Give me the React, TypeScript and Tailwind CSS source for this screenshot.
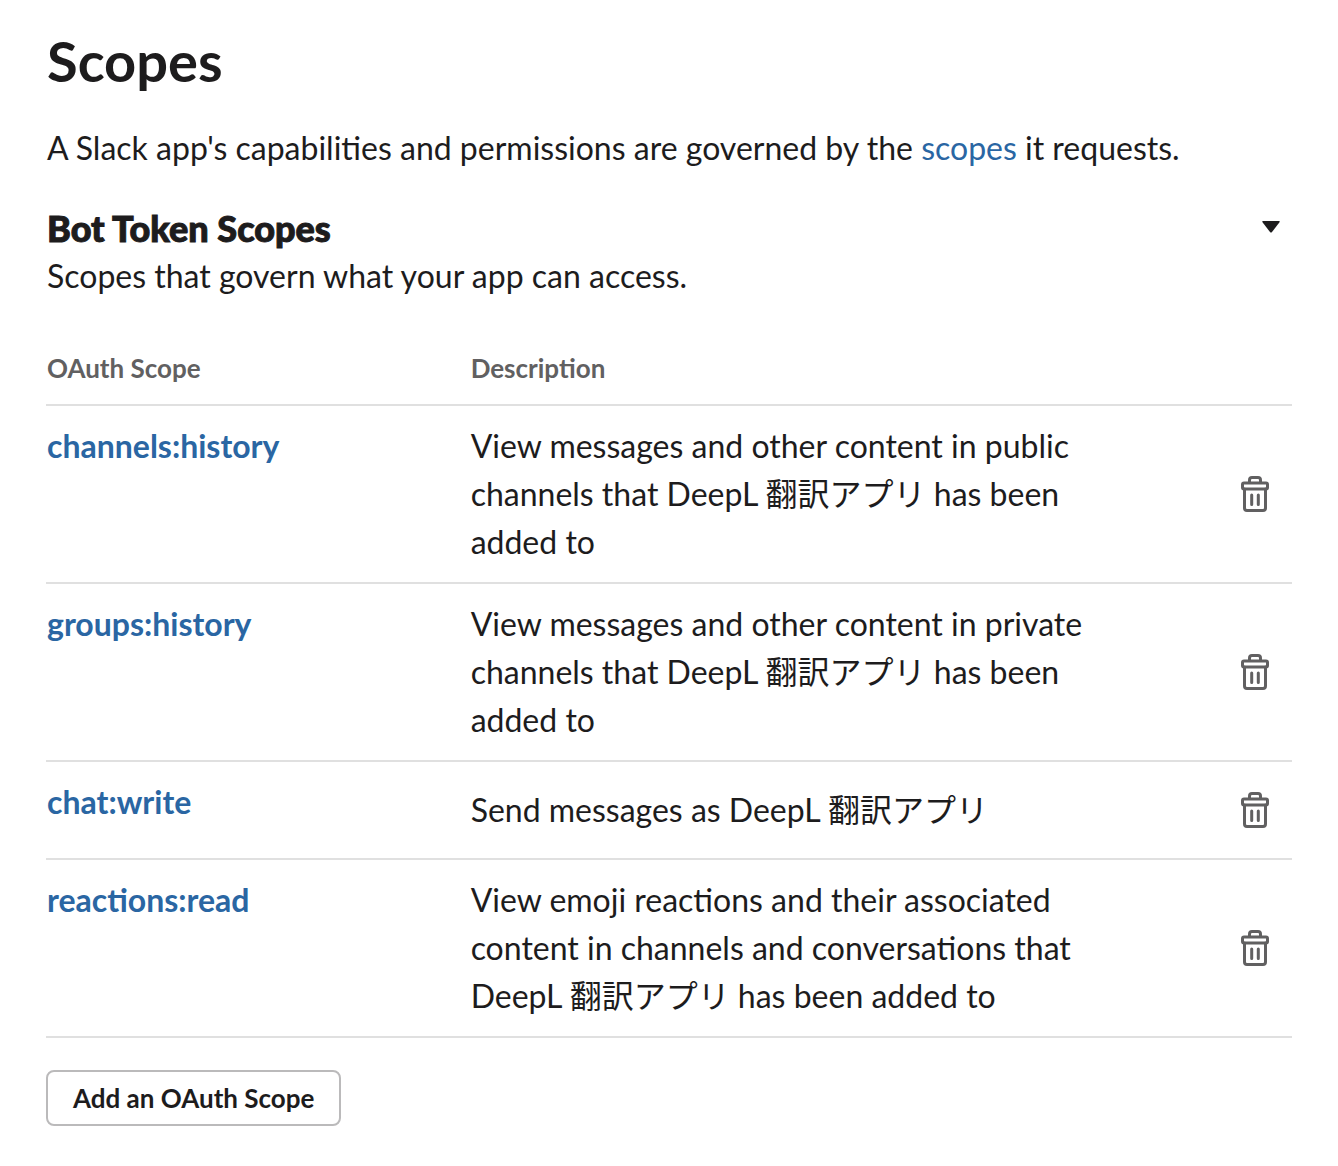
const scopes = [
  { name: "channels:history", text: "View messages and other content in public channels that DeepL 翻訳アプリ has been added to" },
  { name: "groups:history", text: "View messages and other content in private channels that DeepL 翻訳アプリ has been added to" },
  { name: "chat:write", text: "Send messages as DeepL 翻訳アプリ" },
  { name: "reactions:read", text: "View emoji reactions and their associated content in channels and conversations that DeepL 翻訳アプリ has been added to" },
];

function TrashIcon() {
  return (
    <svg width="30" height="38" viewBox="0 0 30 38" fill="none" stroke="#616061" strokeWidth="3" strokeLinejoin="round" strokeLinecap="round" aria-hidden="true">
      <path d="M9.5 7.500V5a2.500 2.500 0 0 1 2.500-2.500h6A2.500 2.500 0 0 1 20.500 5v2.500" />
      <rect x="2.500" y="8" width="25" height="6" rx="1.500" />
      <path d="M4.500 14v19a2.500 2.500 0 0 0 2.500 2.500h16a2.500 2.500 0 0 0 2.500-2.500V14" />
      <path d="M11.700 20v9.500M18.300 20v9.500" />
    </svg>
  );
}

export default function App() {
  return (
    <main className="min-h-screen bg-white px-[46px] pt-8 pb-10 font-['Lato','Noto_Sans_CJK_JP',sans-serif] text-[32px] leading-[48px] text-[#1d1c1d]">
      <h1 className="pl-px text-[56px] leading-[58px] font-bold">Scopes</h1>
      <p className="mt-[34px] pl-px">
        A Slack app's capabilities and permissions are governed by the <a href="#scopes" className="text-[#2a66a3]">scopes</a> it requests.
      </p>
      <section className="mt-8">
        <div className="flex items-center justify-between pr-3 pl-px">
          <h2 className="text-[36px] leading-[48px] font-black [-webkit-text-stroke:1px_#1d1c1d]">Bot Token Scopes</h2>
          <button type="button" aria-label="Collapse bot token scopes" className="mb-0.5">
            <svg width="18" height="12" viewBox="0 0 18 12" aria-hidden="true">
              <path d="M1 0h16q1 0 .7 1L10 11q-1 1-2 0L.3 1Q0 0 1 0z" fill="#1d1c1d" />
            </svg>
          </button>
        </div>
        <p className="pl-px">Scopes that govern what your app can access.</p>
      </section>
      <table className="mt-8 w-full table-fixed border-collapse text-left">
        <colgroup>
          <col className="w-[34%]" />
          <col />
          <col className="w-[180px]" />
        </colgroup>
        <thead>
          <tr className="border-b-2 border-[#e0e0e0] text-[26px] leading-[40px] text-[#616061]">
            <th scope="col" className="py-4 pl-px font-bold">OAuth Scope</th>
            <th scope="col" className="py-4 pl-px font-bold">Description</th>
            <td />
          </tr>
        </thead>
        <tbody>
          {scopes.map((s) => (
            <tr key={s.name} className="h-[98px] border-b-2 border-[#e0e0e0]">
              <td className="py-4 pl-px align-top font-bold">
                <a href={"#" + s.name} className="text-[#2a66a3]">{s.name}</a>
              </td>
              <td className="py-4 pl-px align-middle">{s.text}</td>
              <td className="pr-[22px] align-middle">
                <button type="button" aria-label={"Delete " + s.name} className="ml-auto block">
                  <TrashIcon />
                </button>
              </td>
            </tr>
          ))}
        </tbody>
      </table>
      <button type="button" className="mt-8 h-14 rounded-lg border-2 border-[#bbbabb] px-[25px] text-[26px] leading-[40px] font-bold">
        Add an OAuth Scope
      </button>
    </main>
  );
}
